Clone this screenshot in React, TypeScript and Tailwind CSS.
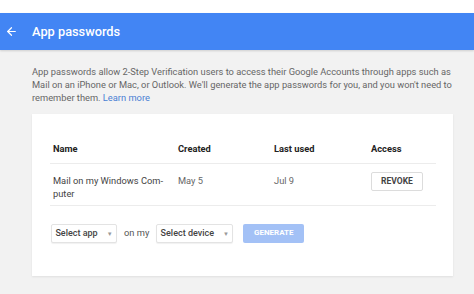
import { ArrowLeft } from "lucide-react";

function Dropdown({ label, width }: { label: string; width: string }) {
  return (
    <div
      className={`${width} h-[19px] flex items-center justify-center gap-[9px] bg-white border border-[#e3e3e3] rounded-[2px] shadow-[0_1px_1px_rgba(0,0,0,0.06)] text-[9px] font-medium text-[#444]`}
    >
      <span>{label}</span>
      <span className="text-[6px] text-[#999]">▼</span>
    </div>
  );
}

export default function App() {
  return (
    <div
      className="w-[474px] h-[294px] bg-[#f2f2f2] overflow-hidden"
      style={{ fontFamily: "Roboto, 'Liberation Sans', sans-serif" }}
    >
      <div className="h-[13px] bg-white" />
      <header className="h-[37px] bg-[#4285f4] flex items-center shadow-[0_1px_2px_rgba(0,0,0,0.15)]">
        <ArrowLeft className="ml-[5px] w-[13px] h-[13px] text-white" strokeWidth={2.2} />
        <h1 className="ml-[14px] text-[12.8px] font-medium text-white">App passwords</h1>
      </header>

      <main className="pl-[32px] pr-[21px] pt-[15px]">
        <p className="text-[9.3px] leading-[13px] text-[#666] whitespace-nowrap">
          App passwords allow 2-Step Verification users to access their Google Accounts through apps such as
          <br />
          Mail on an iPhone or Mac, or Outlook. We'll generate the app passwords for you, and you won't need to
          <br />
          remember them. <span className="text-[#4a7fd4]">Learn more</span>
        </p>

        <div className="mt-[10px] bg-white shadow-[0_1px_2px_rgba(0,0,0,0.08)] pl-[18px] pr-[17px] pt-[28px] pb-[33px]">
          <div className="grid grid-cols-[125px_96px_97px_1fr] text-[9.3px] font-bold text-[#222] pl-[3px] pb-[7px] border-b border-[#ececec]">
            <span>Name</span>
            <span>Created</span>
            <span>Last used</span>
            <span>Access</span>
          </div>

          <div className="grid grid-cols-[125px_96px_97px_1fr] text-[9.3px] leading-[13px] text-[#444] pl-[3px] pt-[10px] pb-[5px] border-b border-[#ececec]">
            <span className="whitespace-nowrap">
              Mail on my Windows Com-
              <br />
              puter
            </span>
            <span className="text-[#666]">May 5</span>
            <span className="text-[#666]">Jul 9</span>
            <div>
              <button className="-mt-[4px] w-[52px] h-[19px] bg-white border border-[#dcdcdc] rounded-[2px] text-[8.5px] font-bold text-[#444]">
                REVOKE
              </button>
            </div>
          </div>

          <div className="flex items-center mt-[18px] pl-[1px]">
            <Dropdown label="Select app" width="w-[66px]" />
            <span className="ml-[7px] text-[9.3px] text-[#555]">on my</span>
            <div className="ml-[7px]">
              <Dropdown label="Select device" width="w-[77px]" />
            </div>
            <button className="ml-[10px] w-[61px] h-[19px] bg-[#a3c1f6] rounded-[2px] text-[8px] font-bold text-white">
              GENERATE
            </button>
          </div>
        </div>
      </main>
    </div>
  );
}
